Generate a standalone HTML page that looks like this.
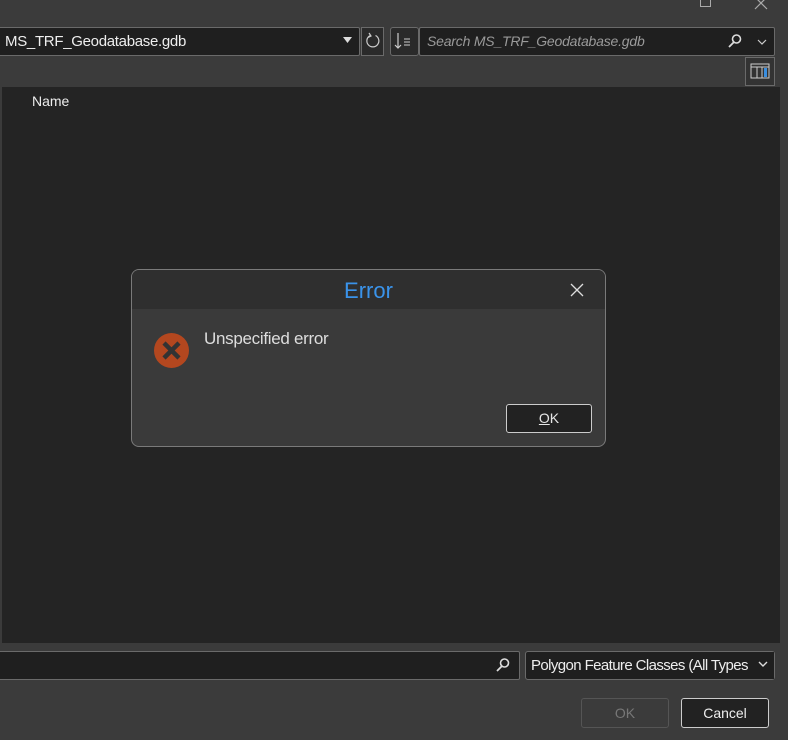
<!DOCTYPE html>
<html><head><style>
*{box-sizing:border-box;margin:0;padding:0}
body{width:788px;height:740px;background:#3b3b3b;font-family:"Segoe UI","Liberation Sans",sans-serif;color:#e6e6e6;position:relative;overflow:hidden;font-size:14px}
.a{position:absolute}
.box{background:#1f1f1f;border:1px solid #6a6a6a;border-radius:2px}
</style></head><body>
<div class="a" style="left:700px;top:-4px;width:11px;height:11px;border:1px solid #aaa"></div>
<svg class="a" style="left:754px;top:0" width="14" height="10"><path d="M1 -3L13 9M13 -3L1 9" stroke="#aaa" stroke-width="1.2"/></svg>

<div class="a box" style="left:-2px;top:27px;width:362px;height:29px;border-left:none"></div>
<div class="a" style="left:5px;top:33px;font-size:15px;color:#eee;letter-spacing:-0.3px">MS_TRF_Geodatabase.gdb</div>
<svg class="a" style="left:343px;top:37px" width="9" height="7"><path d="M0 0H9L4.5 6Z" fill="#ddd"/></svg>
<div class="a" style="left:361px;top:27px;width:23px;height:29px;border:1px solid #6a6a6a;background:#2a2a2a"></div>
<svg class="a" style="left:363px;top:31px" width="20" height="20"><path d="M12.5 4.5A6 6 0 1 1 7 4.6" fill="none" stroke="#ccc" stroke-width="1.2"/><path d="M6 2L8 5L5 6.5" fill="none" stroke="#ccc" stroke-width="1.2"/></svg>
<div class="a" style="left:390px;top:27px;width:29px;height:29px;border:1px solid #6a6a6a;border-radius:3px;background:#2a2a2a"></div>
<svg class="a" style="left:393px;top:31px" width="22" height="20"><path d="M5 2V17M2 14L5 17L8 14" fill="none" stroke="#ccc" stroke-width="1.2"/><path d="M11 8H17M11 11H17M11 14H17" stroke="#ccc" stroke-width="1"/></svg>
<div class="a box" style="left:419px;top:27px;width:356px;height:29px"></div>
<div class="a" style="left:427px;top:33px;font-size:14px;font-style:italic;color:#9a9a9a;letter-spacing:-0.2px">Search MS_TRF_Geodatabase.gdb</div>
<svg class="a" style="left:727px;top:33px" width="16" height="16"><circle cx="9.5" cy="6" r="4" fill="none" stroke="#ddd" stroke-width="1.6"/><path d="M7 9L2 14" stroke="#ddd" stroke-width="1.8"/></svg>
<svg class="a" style="left:756px;top:38px" width="12" height="8"><path d="M2 2L6 6L10 2" fill="none" stroke="#ccc" stroke-width="1.2"/></svg>

<div class="a" style="left:745px;top:57px;width:30px;height:29px;border:1px solid #6a6a6a;background:#333"></div>
<svg class="a" style="left:750px;top:63px" width="20" height="16"><rect x="1" y="1" width="18" height="14" fill="none" stroke="#ccc"/><path d="M1 4H19M7 4V15M12 4V15" stroke="#ccc"/><rect x="14" y="5" width="3" height="9" fill="#3b8fe0"/></svg>

<div class="a" style="left:2px;top:87px;width:778px;height:556px;background:#242424"></div>
<div class="a" style="left:32px;top:93px;font-size:14px;color:#eee">Name</div>

<div class="a" style="left:131px;top:269px;width:475px;height:178px;border:1px solid #7a7a7a;border-radius:8px;background:#3a3a3a;overflow:hidden">
 <div style="height:39px;background:#2f2f2f;text-align:center;font-size:22px;color:#3a93ea;line-height:41px">Error</div>
 <svg class="a" style="left:437px;top:12px" width="16" height="16"><path d="M2 2L14 14M14 2L2 14" stroke="#ddd" stroke-width="1.3"/></svg>
 <svg class="a" style="left:21px;top:62px" width="37" height="37"><circle cx="18.5" cy="18.5" r="17.5" fill="#b3471f"/><path d="M11 11L26 26M26 11L11 26" stroke="#333" stroke-width="4.5"/></svg>
 <div class="a" style="left:72px;top:59px;font-size:17px;color:#ddd;letter-spacing:-0.3px">Unspecified error</div>
 <div class="a" style="left:374px;top:134px;width:86px;height:29px;border:1px solid #ccc;border-radius:3px;background:#222;text-align:center;line-height:27px;font-size:14px"><u>O</u>K</div>
</div>

<div class="a box" style="left:-2px;top:651px;width:522px;height:29px;border-left:none"></div>
<svg class="a" style="left:495px;top:657px" width="16" height="16"><circle cx="9.5" cy="6" r="4" fill="none" stroke="#ddd" stroke-width="1.6"/><path d="M7 9L2 14" stroke="#ddd" stroke-width="1.8"/></svg>
<div class="a box" style="left:525px;top:651px;width:250px;height:29px;border-radius:3px;overflow:hidden;white-space:nowrap;padding:5px 0 0 5px;font-size:15px;color:#eee;letter-spacing:-0.6px">Polygon Feature Classes (All Types</div>
<div class="a" style="left:753px;top:652px;width:21px;height:27px;background:#1f1f1f"></div>
<svg class="a" style="left:757px;top:660px" width="12" height="8"><path d="M2 2L6 6L10 2" fill="none" stroke="#ddd" stroke-width="1.4"/></svg>

<div class="a" style="left:581px;top:698px;width:88px;height:30px;border:1px solid #555;border-radius:3px;text-align:center;line-height:29px;color:#777;font-size:14px">OK</div>
<div class="a" style="left:681px;top:698px;width:88px;height:30px;border:1px solid #ccc;border-radius:3px;background:#222;text-align:center;line-height:29px;color:#eee;font-size:14px">Cancel</div>
</body></html>
